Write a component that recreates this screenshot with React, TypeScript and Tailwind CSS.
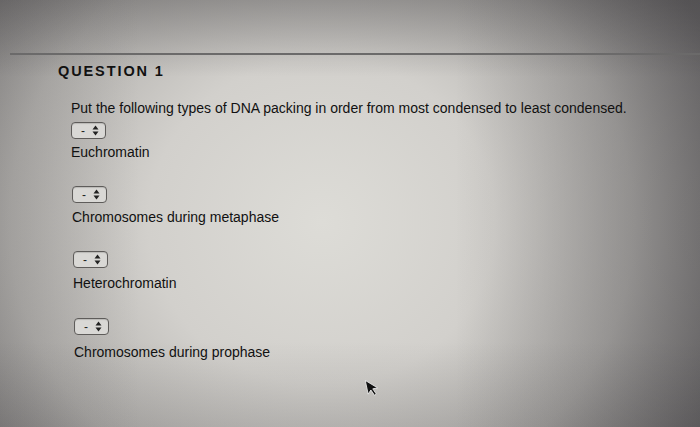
import React from "react";

function Sel({ ml = 0 }: { ml?: number }) {
  return (
    <div
      className="flex h-[17px] w-[35px] items-center rounded-[4px] border border-[#5e5c5a] bg-[#d9d8d5] pl-[9px] pr-[6px] shadow-[inset_0_1px_1px_rgba(0,0,0,0.15)]"
      style={{ marginLeft: ml }}
    >
      <span className="text-[12px] leading-none text-[#222]">-</span>
      <svg className="ml-auto" width="7" height="11" viewBox="0 0 7 11">
        <path d="M3.5 0.5 L6.5 4.5 L0.5 4.5 Z" fill="#222" />
        <path d="M3.5 10.5 L6.5 6.5 L0.5 6.5 Z" fill="#222" />
      </svg>
    </div>
  );
}

const items = [
  { label: "Euchromatin", ml: 0, gap: 0, lm: 5 },
  { label: "Chromosomes during metaphase", ml: 1, gap: 26, lm: 6 },
  { label: "Heterochromatin", ml: 2, gap: 26, lm: 7 },
  { label: "Chromosomes during prophase", ml: 3, gap: 27, lm: 9 },
];

export default function App() {
  return (
    <div
      className="relative h-[427px] w-[700px] overflow-hidden bg-[radial-gradient(ellipse_62%_95%_at_46%_52%,#dddcd7_0%,#d2d0cc_40%,#b2b0ad_72%,#7d7b7b_100%)]"
      style={{ fontFamily: '"Liberation Sans", Arial, sans-serif' }}
    >
      <div className="absolute inset-0 bg-[linear-gradient(180deg,rgba(60,58,60,0.35)_0%,rgba(60,58,60,0)_18%,rgba(0,0,0,0)_80%,rgba(60,58,60,0.15)_100%)]" />
      <div className="absolute inset-0 bg-[linear-gradient(90deg,rgba(60,58,60,0.15)_0%,rgba(0,0,0,0)_20%,rgba(0,0,0,0)_65%,rgba(50,48,52,0.35)_100%)]" />
      <div className="relative pt-[53px] pl-[10px]">
        <div className="h-[2px] bg-[#6b6a6a]" />
        <div className="pl-[48px] pt-[7px]">
          <div className="text-[14.5px] font-bold leading-[18px] tracking-[1.9px] text-[#111]">
            QUESTION 1
          </div>
          <div className="pl-[13px] pt-[20px]">
            <div className="text-[14px] leading-[16px] text-[#111]">
              Put the following types of DNA packing in order from most condensed to least condensed.
            </div>
            <div className="mt-[6px] flex flex-col">
              {items.map((it, i) => (
                <div key={i} style={{ marginTop: it.gap }}>
                  <Sel ml={it.ml} />
                  <div
                    className="text-[14px] leading-[16px] text-[#111]"
                    style={{ marginLeft: it.ml, marginTop: it.lm }}
                  >
                    {it.label}
                  </div>
                </div>
              ))}
            </div>
          </div>
        </div>
      </div>
      <svg
        className="absolute left-[366px] top-[378px]"
        width="14"
        height="20"
        viewBox="0 0 14 20"
        style={{ transform: "rotate(-12deg)" }}
      >
        <path d="M1 1 L1 15 L4.5 11.5 L7 17.5 L9 16.6 L6.6 10.8 L11.5 10.8 Z" fill="#111" stroke="#eee" strokeWidth="0.8" />
      </svg>
    </div>
  );
}
